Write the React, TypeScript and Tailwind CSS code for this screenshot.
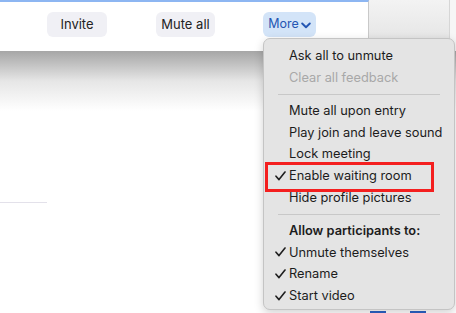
import React from "react";

type Item = {
  label: string;
  checked?: boolean;
  disabled?: boolean;
  bold?: boolean;
  sep?: boolean;
};

const items: Item[] = [
  { label: "Ask all to unmute" },
  { label: "Clear all feedback", disabled: true },
  { label: "", sep: true },
  { label: "Mute all upon entry" },
  { label: "Play join and leave sound" },
  { label: "Lock meeting" },
  { label: "Enable waiting room", checked: true },
  { label: "Hide profile pictures" },
  { label: "", sep: true },
  { label: "Allow participants to:", bold: true },
  { label: "Unmute themselves", checked: true },
  { label: "Rename", checked: true },
  { label: "Start video", checked: true },
];

function Check() {
  return (
    <svg width="11" height="10" viewBox="0 0 11 10" className="shrink-0">
      <path d="M1 5.2 L4 8.6 L10 1" fill="none" stroke="#1f1f1f" strokeWidth="1.6" strokeLinecap="round" strokeLinejoin="round" />
    </svg>
  );
}

function Btn({ children, active }: { children: React.ReactNode; active?: boolean }) {
  return (
    <div
      className={
        active
          ? "h-[25px] px-[5px] rounded-[6px] bg-[#d3e4f8] text-[#2456b3] flex items-center justify-center gap-[2px] text-[13px]"
          : "h-[25px] rounded-[6px] bg-[#f0f0f5] text-[#232323] flex items-center justify-center text-[13px]"
      }
    >
      {children}
    </div>
  );
}

export default function App() {
  return (
    <div
      className="relative w-[456px] h-[313px] overflow-hidden bg-white"
      style={{ fontFamily: "Inter, 'Noto Sans', sans-serif" }}
    >
      {/* top bar */}
      <div className="flex h-[51px]">
        <div className="w-[369px] h-[51px] bg-white border-t-[2px] border-[#8db6f2] border-r border-r-[#c9c9c9] flex items-start pt-[10px] pl-[47px] gap-[49px]">
          <div className="w-[60px]">
            <Btn>Invite</Btn>
          </div>
          <div className="w-[59px]">
            <Btn>Mute all</Btn>
          </div>
          <div className="w-[53px] -ml-[1px]">
            <Btn active>
              <span className="text-[12.5px]">More</span>
              <svg width="10" height="7" viewBox="0 0 10 7" className="shrink-0 mt-[1px]">
                <path d="M1.2 1.5 L5 5.2 L8.8 1.5" fill="none" stroke="#2456b3" strokeWidth="1.9" strokeLinecap="round" strokeLinejoin="round" />
              </svg>
            </Btn>
          </div>
        </div>
        <div className="flex-1 flex">
          <div className="w-[81px] bg-gradient-to-b from-[#f3f3f3] to-[#e2e2e2] border-r border-[#d6d6d6]" />
          <div className="flex-1 bg-[#f6f6f6]" />
        </div>
      </div>

      {/* shadow below the bar */}
      <div className="h-[60px] bg-gradient-to-b from-[#a6a6a6] via-[#e6e6e6] to-white" />

      <div className="mt-[91px] w-[47px] h-[1px] bg-[#e3e1ea]" />

      <div className="mt-[108px] flex pl-[370px] gap-[24px]">
        <div className="w-[16px] h-[2px] bg-[#2a63c6]" />
        <div className="w-[16px] h-[2px] bg-[#2a63c6]" />
      </div>

      {/* dropdown menu */}
      <div className="absolute left-[263px] top-[38px] w-[192px] h-[272px] bg-[#e4e4e4] border border-[#c4c4c4] rounded-[7px] shadow-[0_3px_10px_rgba(0,0,0,0.18)] pt-[6px] text-[12.8px] text-[#1c1c1c]">
        {items.map((it, i) =>
          it.sep ? (
            <div key={i} className="h-[11px] flex items-center px-[14px]">
              <div className="h-[1px] w-full bg-[#c8c8c8]" />
            </div>
          ) : (
            <div key={i} className="h-[21.8px] flex items-center">
              <div className="w-[25px] flex justify-end pr-[3px]">{it.checked && <Check />}</div>
              <span
                className={
                  it.disabled
                    ? "text-[#a8a8a8]"
                    : it.bold
                    ? "font-semibold"
                    : ""
                }
              >
                {it.label}
              </span>
            </div>
          )
        )}

        {/* highlight annotation */}
        <div className="absolute left-[1px] top-[123px] w-[169px] h-[30px] border-[3px] border-[#f41f1f]" />
      </div>
    </div>
  );
}
